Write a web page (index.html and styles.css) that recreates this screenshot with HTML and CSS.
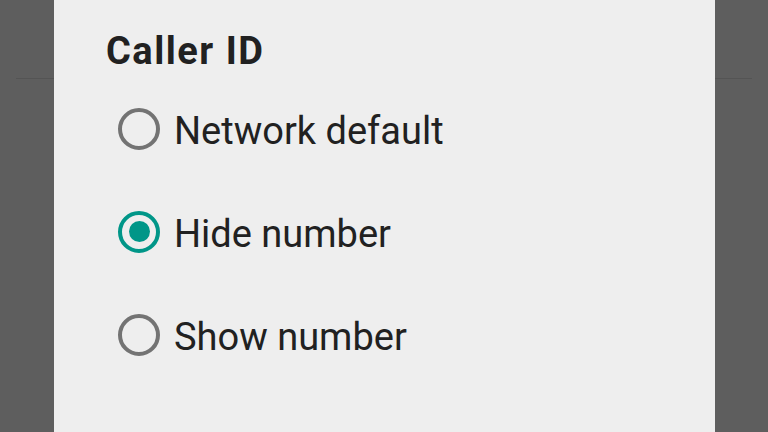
FILE: index.html
```html
<!DOCTYPE html>
<html lang="en">
<head>
<meta charset="utf-8">
<title>Caller ID</title>
<link rel="stylesheet" href="styles.css">
</head>
<body>
<div class="screen">
  <div class="appbar"></div>
</div>
<div class="dialog" role="dialog" aria-labelledby="dlg-title">
  <h1 class="dialog-title" id="dlg-title">Caller ID</h1>
  <ul class="options">
    <li class="option"><span class="radio"></span><span class="label">Network default</span></li>
    <li class="option"><span class="radio radio-checked"></span><span class="label">Hide number</span></li>
    <li class="option"><span class="radio"></span><span class="label">Show number</span></li>
  </ul>
</div>
</body>
</html>
```
FILE: styles.css
```css
html, body {
  margin: 0;
  padding: 0;
}
body {
  width: 768px;
  height: 432px;
  background: #5e5e5e;
  overflow: hidden;
  position: relative;
  font-family: Roboto, "Liberation Sans", sans-serif;
}
.screen {
  padding: 0 16px;
}
.appbar {
  height: 78px;
  border-bottom: 1px solid #545454;
}
.dialog {
  position: absolute;
  top: 0;
  left: 54px;
  width: 661px;
  height: 432px;
  background: #eeeeee;
  box-sizing: border-box;
  padding: 29px 0 0 52px;
}
.dialog-title {
  margin: 0;
  font-size: 38px;
  line-height: 44px;
  font-weight: 700;
  letter-spacing: 1.5px;
  color: #212121;
}
.options {
  list-style: none;
  margin: 4px 0 0;
  padding: 0 0 0 12px;
}
.option {
  display: flex;
  align-items: center;
  height: 103px;
  gap: 14px;
}
.radio {
  box-sizing: border-box;
  width: 42px;
  height: 42px;
  border: 4px solid #737373;
  border-radius: 50%;
  display: flex;
  align-items: center;
  justify-content: center;
  flex: none;
}
.radio-checked {
  border-color: #009688;
}
.radio-checked::after {
  content: "";
  width: 21px;
  height: 21px;
  border-radius: 50%;
  background: #009688;
}
.label {
  font-size: 38px;
  line-height: 44px;
  color: #212121;
  padding-top: 4px;
}
```
